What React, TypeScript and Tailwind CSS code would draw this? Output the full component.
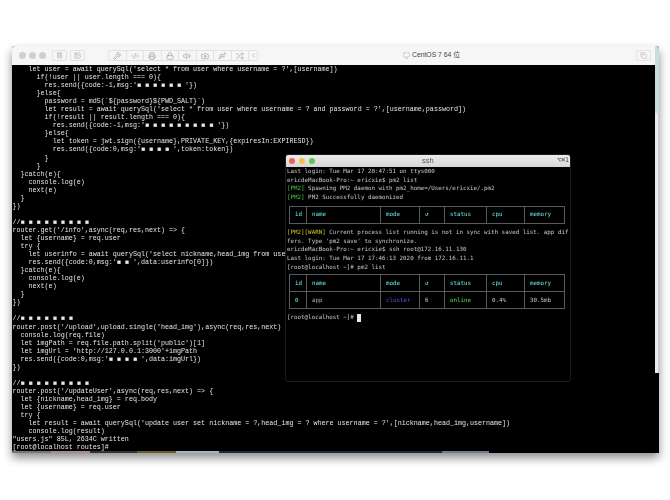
import { Camera, Code2, Printer, Shuffle, Usb, Volume2, Wrench, Lock, ChevronLeft, Pause, Image as ImageIcon, Copy, Monitor } from "lucide-react";

const codeLines = [
  "    let user = await querySql('select * from user where username = ?',[username])",
  "      if(!user || user.length === 0){",
  "        res.send({code:-1,msg:'■ ■ ■ ■ ■ ■ '})",
  "      }else{",
  "        password = md5(`${password}${PWD_SALT}`)",
  "        let result = await querySql('select * from user where username = ? and password = ?',[username,password])",
  "        if(!result || result.length === 0){",
  "          res.send({code:-1,msg:'■ ■ ■ ■ ■ ■ ■ ■ ■ '})",
  "        }else{",
  "          let token = jwt.sign({username},PRIVATE_KEY,{expiresIn:EXPIRESD})",
  "          res.send({code:0,msg:'■ ■ ■ ■ ',token:token})",
  "        }",
  "      }",
  "  }catch(e){",
  "    console.log(e)",
  "    next(e)",
  "  }",
  "})",
  "",
  "//■ ■ ■ ■ ■ ■ ■ ■ ■",
  "router.get('/info',async(req,res,next) => {",
  "  let {username} = req.user",
  "  try {",
  "    let userinfo = await querySql('select nickname,head_img from user where username = ?',[username])",
  "    res.send({code:0,msg:'■ ■ ',data:userinfo[0]})",
  "  }catch(e){",
  "    console.log(e)",
  "    next(e)",
  "  }",
  "})",
  "",
  "//■ ■ ■ ■ ■ ■ ■",
  "router.post('/upload',upload.single('head_img'),async(req,res,next) => {",
  "  console.log(req.file)",
  "  let imgPath = req.file.path.split('public')[1]",
  "  let imgUrl = 'http://127.0.0.1:3000'+imgPath",
  "  res.send({code:0,msg:'■ ■ ■ ■ ',data:imgUrl})",
  "})",
  "",
  "//■ ■ ■ ■ ■ ■ ■ ■ ■",
  "router.post('/updateUser',async(req,res,next) => {",
  "  let {nickname,head_img} = req.body",
  "  let {username} = req.user",
  "  try {",
  "    let result = await querySql('update user set nickname = ?,head_img = ? where username = ?',[nickname,head_img,username])",
  "    console.log(result)",
  '"users.js" 85L, 2634C written',
  "[root@localhost routes]#",
];

const toolIcons = [Wrench, Code2, Printer, Lock, Volume2, Camera, Usb, Shuffle];
const headers = ["id", "name", "mode", "↺", "status", "cpu", "memory"];

function Row({ cells, last }: { cells: React.ReactNode[]; last?: boolean }) {
  return (
    <div className={`grid grid-cols-[17px_74px_39px_25px_42px_38px_39px] ${last ? "h-[16px]" : "h-[17px] border-b border-[#5a5a5a]"}`}>
      {cells.map((c, i) => (
        <div key={i} className={`flex items-center pl-[5px] ${i < 6 ? "border-r border-[#5a5a5a]" : ""}`}>
          {c}
        </div>
      ))}
    </div>
  );
}

function Header({ last }: { last?: boolean }) {
  return <Row last={last} cells={headers.map((h) => <span key={h} className="text-[#63e6e6]">{h}</span>)} />;
}

function SshWindow() {
  return (
    <div className="absolute left-[285px] top-[154px] w-[286px] h-[228px] rounded-[3px] bg-black border border-[#1c1c1c] font-['DejaVu_Sans_Mono',monospace] text-[5.85px] text-[#c8c8c8] overflow-hidden">
      <div className="h-[12px] bg-gradient-to-b from-[#ececec] to-[#d6d6d6] flex items-center justify-between pl-[3px] pr-[1px] relative blur-[0.3px]">
        <div className="flex gap-[4px]">
          <span className="w-[6px] h-[6px] rounded-full bg-[#ee5f57]" />
          <span className="w-[6px] h-[6px] rounded-full bg-[#f4bd4f]" />
          <span className="w-[6px] h-[6px] rounded-full bg-[#5fc453]" />
        </div>
        <span className="absolute left-[136px] text-[#555] font-['Liberation_Sans',sans-serif] text-[7.5px]">ssh</span>
        <span className="text-[#444] text-[6.5px]">⌥⌘1</span>
      </div>
      <div className="px-[1px] leading-[8.7px] whitespace-pre blur-[0.3px]">
        <div>Last login: Tue Mar 17 20:47:51 on ttys000</div>
        <div>ericdeMacBook-Pro:~ ericxie$ pm2 list</div>
        <div><span className="text-[#4fc24f]">[PM2]</span> Spawning PM2 daemon with pm2_home=/Users/ericxie/.pm2</div>
        <div><span className="text-[#4fc24f]">[PM2]</span> PM2 Successfully daemonized</div>
        <div className="mt-[4px] mb-[4px] ml-[2px] w-[276px] border border-[#5a5a5a]">
          <Header last />
        </div>
        <div><span className="text-[#c9c92e]">[PM2][WARN]</span> Current process list running is not in sync with saved list. app dif</div>
        <div>fers. Type 'pm2 save' to synchronize.</div>
        <div>ericdeMacBook-Pro:~ ericxie$ ssh root@172.16.11.130</div>
        <div>Last login: Tue Mar 17 17:46:13 2020 from 172.16.11.1</div>
        <div>[root@localhost ~]# pm2 list</div>
        <div className="mt-[3px] mb-[4px] ml-[2px] w-[276px] border border-[#5a5a5a]">
          <Header />
          <Row
            last
            cells={[
              <span className="text-[#63e6e6]">0</span>,
              <span className="text-[#aaa]">app</span>,
              <span className="text-[#5555f5]">cluster</span>,
              <span>6</span>,
              <span className="text-[#50e050]">online</span>,
              <span>0.4%</span>,
              <span>30.5mb</span>,
            ]}
          />
        </div>
        <div className="flex items-center">
          <span>[root@localhost ~]# </span>
          <span className="w-[3.5px] h-[8px] bg-[#e8e8e8]" />
        </div>
      </div>
    </div>
  );
}

export default function App() {
  return (
    <div className="w-[670px] h-[500px] bg-white relative overflow-hidden pl-[12px] pt-[46px]">
      <div className="w-[647px] h-[407px] relative flex flex-col bg-black shadow-[0_5px_10px_rgba(0,0,0,0.45)] rounded-t-[3px] overflow-hidden">
        <div className="h-[19px] w-[643px] shrink-0 bg-[#f6f6f6] flex items-center pl-[7px] pr-[4px] relative">
          <div className="flex gap-[3px]">
            <span className="w-[7px] h-[7px] rounded-full bg-[#cfcfcf]" />
            <span className="w-[7px] h-[7px] rounded-full bg-[#cfcfcf]" />
            <span className="w-[7px] h-[7px] rounded-full bg-[#cfcfcf]" />
          </div>
          <div className="flex gap-[3px] ml-[6px]">
            <div className="w-[15px] h-[11px] border border-[#e2e2e2] rounded-[2px] flex items-center justify-center"><Pause size={7} color="#aaa" /></div>
            <div className="w-[15px] h-[11px] border border-[#e2e2e2] rounded-[2px] flex items-center justify-center"><ImageIcon size={7} color="#aaa" /></div>
          </div>
          <div className="flex ml-[23px] border border-[#e2e2e2] rounded-[2px] h-[11px]">
            {toolIcons.map((Icon, i) => (
              <div key={i} className="w-[17.5px] border-r border-[#e2e2e2] flex items-center justify-center"><Icon size={8} color="#a0a0a0" /></div>
            ))}
            <div className="w-[8px] flex items-center justify-center"><ChevronLeft size={7} color="#a0a0a0" /></div>
          </div>
          <div className="absolute left-[391px] flex items-center gap-[2px] text-[6.8px] text-[#444] font-['Liberation_Sans','Noto_Sans_CJK_SC',sans-serif]">
            <Monitor size={7} color="#bbb" />
            <span>CentOS 7 64 位</span>
          </div>
          <div className="ml-auto w-[15px] h-[11px] border border-[#e4e4e4] rounded-[2px] flex items-center justify-center"><Copy size={7} color="#bbb" /></div>
        </div>
        <pre className="flex-1 pl-[0.5px] font-['Liberation_Mono',monospace] text-[6.7px] leading-[8.05px] text-[#e6e6e6] overflow-hidden blur-[0.4px]">
          {codeLines.join("\n")}
        </pre>
        {/* desktop showing through on the right edge */}
        <div className="absolute right-0 top-0 w-[4px] flex flex-col">
          <div className="h-[67px] bg-[#c6dde1]" />
          <div className="h-[260px] bg-[#ececec] border-r border-[#ccc]" />
        </div>
        {/* wallpaper sliver along the bottom */}
        <div className="absolute left-0 bottom-0 h-[2px] flex w-[520px]">
          <div className="w-[39px] bg-[#777]" />
          <div className="w-[39px] bg-[#a88]" />
          <div className="w-[47px] bg-[#333]" />
          <div className="w-[39px] bg-[#6b5a2a]" />
          <div className="w-[43px] bg-[#9fb6bf]" />
          <div className="w-[223px] bg-[#1c2a4a]" />
          <div className="w-[47px] bg-[#6a7d90]" />
        </div>
      </div>
      <SshWindow />
    </div>
  );
}
